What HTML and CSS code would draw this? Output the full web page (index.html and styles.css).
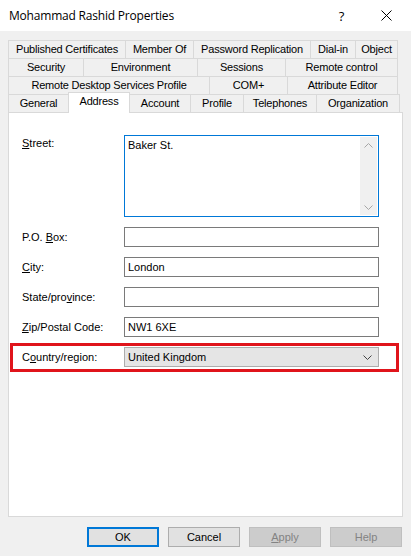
FILE: index.html
```html
<!DOCTYPE html>
<html lang="en">
<head>
    <meta charset="UTF-8">
    <meta name="viewport" content="width=device-width, initial-scale=1.0">
    <title>Mohammad Rashid Properties</title>
    <link rel="stylesheet" href="styles.css">
</head>
<body>

    <div class="window">
        <!-- Заголовок окна -->
        <header class="titlebar">
            <span class="title">Mohammad Rashid Properties</span>
            <div class="caption-buttons">
                <span class="caption-btn help-btn">?</span>
                <span class="caption-btn">
                    <svg width="11" height="11" viewBox="0 0 11 11">
                        <path d="M0.5 0.5L10.5 10.5M10.5 0.5L0.5 10.5" stroke="#000" stroke-width="1" fill="none"/>
                    </svg>
                </span>
            </div>
        </header>

        <div class="dialog-body">
            <!-- Вкладки в четыре ряда -->
            <div class="tabs">
                <div class="tab-row row-1">
                    <div class="tab">Published Certificates</div>
                    <div class="tab">Member Of</div>
                    <div class="tab">Password Replication</div>
                    <div class="tab">Dial-in</div>
                    <div class="tab">Object</div>
                </div>
                <div class="tab-row row-2">
                    <div class="tab">Security</div>
                    <div class="tab">Environment</div>
                    <div class="tab">Sessions</div>
                    <div class="tab">Remote control</div>
                </div>
                <div class="tab-row row-3">
                    <div class="tab">Remote Desktop Services Profile</div>
                    <div class="tab">COM+</div>
                    <div class="tab">Attribute Editor</div>
                </div>
                <div class="tab-row row-4">
                    <div class="tab">General</div>
                    <div class="tab active">Address</div>
                    <div class="tab">Account</div>
                    <div class="tab">Profile</div>
                    <div class="tab">Telephones</div>
                    <div class="tab">Organization</div>
                </div>
            </div>

            <!-- Содержимое вкладки Address -->
            <div class="panel">
                <div class="form">
                    <div class="field field-street">
                        <label class="label"><u>S</u>treet:</label>
                        <div class="textarea focused">
                            <span class="textarea-text">Baker St.</span>
                            <div class="scrollbar">
                                <svg width="9" height="5" viewBox="0 0 9 5"><path d="M0.5 4.5L4.5 0.5L8.5 4.5" stroke="#a6a6a6" fill="none"/></svg>
                                <svg width="9" height="5" viewBox="0 0 9 5"><path d="M0.5 0.5L4.5 4.5L8.5 0.5" stroke="#a6a6a6" fill="none"/></svg>
                            </div>
                        </div>
                    </div>
                    <div class="field">
                        <label class="label">P.O. <u>B</u>ox:</label>
                        <div class="input"></div>
                    </div>
                    <div class="field">
                        <label class="label"><u>C</u>ity:</label>
                        <div class="input">London</div>
                    </div>
                    <div class="field">
                        <label class="label">State/pro<u>v</u>ince:</label>
                        <div class="input"></div>
                    </div>
                    <div class="field">
                        <label class="label"><u>Z</u>ip/Postal Code:</label>
                        <div class="input">NW1 6XE</div>
                    </div>
                    <div class="field field-marked">
                        <label class="label">C<u>o</u>untry/region:</label>
                        <div class="select">
                            <span>United Kingdom</span>
                            <svg width="9" height="5" viewBox="0 0 9 5"><path d="M0.5 0.5L4.5 4.5L8.5 0.5" stroke="#444" fill="none"/></svg>
                        </div>
                    </div>
                </div>
            </div>

            <!-- Кнопки диалога -->
            <div class="buttons">
                <button class="btn btn-default">OK</button>
                <button class="btn">Cancel</button>
                <button class="btn" disabled><u>A</u>pply</button>
                <button class="btn" disabled>Help</button>
            </div>
        </div>
    </div>

</body>
</html>
```

FILE: styles.css
```css
:root {
    --face: #f0f0f0;
    --tab-border: #d9d9d9;
    --input-border: #7a7a7a;
    --accent: #0078d7;
    --marker: #e0141b;
}

* {
    box-sizing: border-box;
    margin: 0;
    padding: 0;
}

body {
    font-family: 'Liberation Sans', Arial, sans-serif;
    font-size: 11px;
    color: #000;
    background: var(--face);
    width: 411px;
    height: 556px;
    overflow: hidden;
}

.window {
    display: flex;
    flex-direction: column;
    height: 100%;
}

/* Заголовок */
.titlebar {
    height: 31px;
    background: #fff;
    display: flex;
    align-items: center;
    padding-left: 9px;
    padding-right: 2px;
}

.title {
    font-family: 'Open Sans', 'Liberation Sans', sans-serif;
    font-size: 12px;
    letter-spacing: -0.2px;
}

.caption-buttons {
    margin-left: auto;
    display: flex;
}

.caption-btn {
    width: 45px;
    height: 31px;
    display: flex;
    align-items: center;
    justify-content: center;
}

.help-btn {
    font-family: 'Open Sans', 'Liberation Sans', sans-serif;
    font-size: 13px;
}

/* Тело диалога */
.dialog-body {
    flex: 1;
    padding: 9px 8px 0 8px;
}

.tab-row {
    display: grid;
    height: 18px;
    width: 390px;
}

.row-1 { grid-template-columns: 117px 68px 117px 45px 43px; }
.row-2 { grid-template-columns: 75px 114px 88px 113px; }
.row-3 { grid-template-columns: 201px 78px 111px; }
.row-4 { grid-template-columns: 60px 62px 60px 53px 73px 84px; width: 392px; }

.tab {
    border-top: 1px solid var(--tab-border);
    border-left: 1px solid var(--tab-border);
    background: var(--face);
    text-align: center;
    line-height: 17px;
    white-space: nowrap;
    letter-spacing: -0.2px;
}

.tab:last-child {
    border-right: 1px solid var(--tab-border);
}

.tab.active {
    position: relative;
    z-index: 1;
    margin-top: -2px;
    margin-bottom: -1px;
    background: #fff;
    border-right: 1px solid var(--tab-border);
    padding-bottom: 3px;
}

.tab.active + .tab {
    border-left: none;
}

/* Панель вкладки */
.panel {
    width: 395px;
    height: 405px;
    background: #fff;
    border: 1px solid var(--tab-border);
}

.form {
    display: flex;
    flex-direction: column;
    gap: 10px;
    padding: 22px 23px 0 13px;
}

.field {
    display: flex;
    align-items: center;
}

.label {
    width: 102px;
    line-height: 20px;
}

.field-street {
    align-items: flex-start;
}

.field-street .label {
    line-height: 17px;
}

.input,
.select,
.textarea {
    width: 255px;
    height: 20px;
    border: 1px solid var(--input-border);
    background: #fff;
    padding-left: 3px;
    line-height: 18px;
}

.textarea {
    height: 82px;
    display: flex;
    padding-left: 0;
}

.textarea.focused {
    border-color: var(--accent);
}

.textarea-text {
    flex: 1;
    padding: 2px 3px;
    line-height: 14px;
}

.scrollbar {
    width: 17px;
    margin: 1px;
    background: var(--face);
    display: flex;
    flex-direction: column;
    justify-content: space-between;
    align-items: center;
    padding: 6px 0 5px;
}

/* Выпадающий список, обведён красной рамкой */
.select {
    background: #e5e5e5;
    border-color: #acacac;
    display: flex;
    align-items: center;
    justify-content: space-between;
    padding-right: 6px;
}

.field-marked {
    margin: -4px -20px -5px -12px;
    padding: 1px 17px 2px 9px;
    border: 3px solid var(--marker);
}

/* Кнопки */
.buttons {
    display: flex;
    justify-content: flex-end;
    gap: 9px;
    margin-top: 10px;
    padding-right: 1px;
}

.btn {
    width: 72px;
    height: 20px;
    font-family: 'Liberation Sans', Arial, sans-serif;
    font-size: 11px;
    color: #000;
    background: #e1e1e1;
    border: 1px solid #adadad;
}

.btn-default {
    border: 2px solid var(--accent);
}

.btn:disabled {
    background: #cccccc;
    border-color: #bfbfbf;
    color: #838383;
}
```
